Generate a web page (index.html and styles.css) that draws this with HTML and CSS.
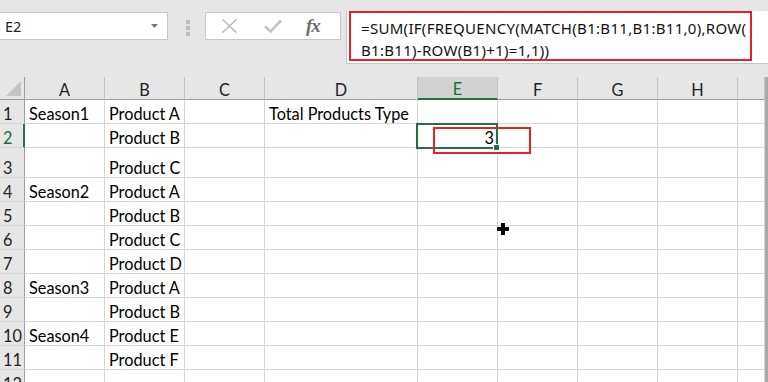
FILE: index.html
```html
<!DOCTYPE html>
<html lang="en">

<head>
    <meta charset="UTF-8">
    <title>Count unique products</title>
    <link rel="stylesheet" href="styles.css">
</head>

<body>
    <div class="formula-bar">
        <div class="name-box">
            <span>E2</span>
            <svg class="caret" width="7" height="4" viewBox="0 0 7 4"><path d="M0 0H7L3.5 4Z" fill="#777" /></svg>
        </div>
        <div class="grip"><i></i><i></i><i></i></div>
        <div class="fx-buttons">
            <svg width="17" height="14" viewBox="0 0 17 14">
                <path d="M1.5 0.5L15.5 13.5M15.5 0.5L1.5 13.5" stroke="#bdbdbd" stroke-width="1.6" fill="none" />
            </svg>
            <svg width="18" height="14" viewBox="0 0 18 14">
                <path d="M1 7.5L6.5 12.5L17 1.5" stroke="#c4c4c4" stroke-width="2.6" fill="none" />
            </svg>
            <span class="fx">fx</span>
        </div>
        <div class="formula-input">
            <div class="formula-text">=SUM(IF(FREQUENCY(MATCH(B1:B11,B1:B11,0),ROW(<br>B1:B11)-ROW(B1)+1)=1,1))</div>
        </div>
    </div>

    <div class="sheet">
        <div class="corner"><svg width="15" height="15" viewBox="0 0 15 15"><path d="M15 0V15H0Z" fill="#c2c2c2" /></svg></div>
        <div class="col-head">A</div>
        <div class="col-head">B</div>
        <div class="col-head">C</div>
        <div class="col-head">D</div>
        <div class="col-head active">E</div>
        <div class="col-head">F</div>
        <div class="col-head">G</div>
        <div class="col-head">H</div>
        <div class="col-head"></div>

        <div class="row-head">1</div>
        <div class="cell">Season1</div>
        <div class="cell">Product A</div>
        <div class="cell"></div>
        <div class="cell">Total Products Type</div>
        <div class="cell"></div>
        <div class="cell"></div>
        <div class="cell"></div>
        <div class="cell"></div>
        <div class="cell"></div>

        <div class="row-head active">2</div>
        <div class="cell"></div>
        <div class="cell">Product B</div>
        <div class="cell"></div>
        <div class="cell"></div>
        <div class="cell number selected">3<span class="mark"></span></div>
        <div class="cell"></div>
        <div class="cell"></div>
        <div class="cell"></div>
        <div class="cell"></div>

        <div class="row-head">3</div>
        <div class="cell"></div>
        <div class="cell">Product C</div>
        <div class="cell"></div>
        <div class="cell"></div>
        <div class="cell"></div>
        <div class="cell"></div>
        <div class="cell"></div>
        <div class="cell"></div>
        <div class="cell"></div>

        <div class="row-head">4</div>
        <div class="cell">Season2</div>
        <div class="cell">Product A</div>
        <div class="cell"></div>
        <div class="cell"></div>
        <div class="cell"></div>
        <div class="cell"></div>
        <div class="cell"></div>
        <div class="cell"></div>
        <div class="cell"></div>

        <div class="row-head">5</div>
        <div class="cell"></div>
        <div class="cell">Product B</div>
        <div class="cell"></div>
        <div class="cell"></div>
        <div class="cell"></div>
        <div class="cell"></div>
        <div class="cell"></div>
        <div class="cell"></div>
        <div class="cell"></div>

        <div class="row-head">6</div>
        <div class="cell"></div>
        <div class="cell">Product C</div>
        <div class="cell"></div>
        <div class="cell"></div>
        <div class="cell"></div>
        <div class="cell"></div>
        <div class="cell"></div>
        <div class="cell"></div>
        <div class="cell"></div>

        <div class="row-head">7</div>
        <div class="cell"></div>
        <div class="cell">Product D</div>
        <div class="cell"></div>
        <div class="cell"></div>
        <div class="cell"></div>
        <div class="cell"></div>
        <div class="cell"></div>
        <div class="cell"></div>
        <div class="cell"></div>

        <div class="row-head">8</div>
        <div class="cell">Season3</div>
        <div class="cell">Product A</div>
        <div class="cell"></div>
        <div class="cell"></div>
        <div class="cell"></div>
        <div class="cell"></div>
        <div class="cell"></div>
        <div class="cell"></div>
        <div class="cell"></div>

        <div class="row-head">9</div>
        <div class="cell"></div>
        <div class="cell">Product B</div>
        <div class="cell"></div>
        <div class="cell"></div>
        <div class="cell"></div>
        <div class="cell"></div>
        <div class="cell"></div>
        <div class="cell"></div>
        <div class="cell"></div>

        <div class="row-head">10</div>
        <div class="cell">Season4</div>
        <div class="cell">Product E</div>
        <div class="cell"></div>
        <div class="cell"></div>
        <div class="cell"></div>
        <div class="cell"></div>
        <div class="cell"></div>
        <div class="cell"></div>
        <div class="cell"></div>

        <div class="row-head">11</div>
        <div class="cell"></div>
        <div class="cell">Product F</div>
        <div class="cell"></div>
        <div class="cell"></div>
        <div class="cell"></div>
        <div class="cell"></div>
        <div class="cell"></div>
        <div class="cell"></div>
        <div class="cell"></div>

        <div class="row-head">12</div>
        <div class="cell"></div>
        <div class="cell"></div>
        <div class="cell"></div>
        <div class="cell"></div>
        <div class="cell"></div>
        <div class="cell"></div>
        <div class="cell"></div>
        <div class="cell"></div>
        <div class="cell"></div>

        <svg class="cursor" width="12" height="12" viewBox="0 0 12 12">
            <path d="M4 0H8V4H12V8H8V12H4V8H0V4H4Z" fill="#000" />
        </svg>
    </div>
</body>

</html>
```

FILE: styles.css
```css
body {
    margin: 0;
    width: 768px;
    height: 382px;
    overflow: hidden;
    background-color: #e6e6e6;
    font-family: Lato, 'Liberation Sans', sans-serif;
    color: #000;
}

/* formula bar */

.formula-bar {
    display: flex;
    align-items: flex-start;
    height: 77px;
    padding-top: 12px;
    box-sizing: border-box;
    font-family: 'Noto Sans', 'Open Sans', sans-serif;
}

.name-box {
    display: flex;
    align-items: center;
    justify-content: space-between;
    width: 168px;
    height: 28px;
    box-sizing: border-box;
    padding: 0 9px 0 5px;
    background: white;
    border: 1px solid #c6c6c6;
    border-left: none;
    font-size: 14.5px;
    color: #222;
}

.grip {
    display: flex;
    flex-direction: column;
    gap: 2px;
    margin: 8px 0 0 18px;
}

.grip i {
    width: 4px;
    height: 4px;
    background: #bcbcbc;
}

.fx-buttons {
    display: flex;
    align-items: center;
    width: 136px;
    height: 28px;
    box-sizing: border-box;
    margin-left: 15px;
    padding-left: 15px;
    gap: 26px;
    background: white;
    border: 1px solid #c6c6c6;
}

.fx {
    font-family: 'Liberation Serif', serif;
    font-style: italic;
    font-weight: bold;
    font-size: 19px;
    color: #6e6e6e;
    margin-left: -2px;
    letter-spacing: -1px;
}

.formula-input {
    flex: 1;
    height: 53px;
    margin: -1px 0 0 5px;
    padding-left: 2px;
    box-sizing: border-box;
    background: white;
    border-left: 1px solid #c6c6c6;
    border-bottom: 1px solid #c6c6c6;
}

.formula-text {
    width: 403px;
    height: 50px;
    box-sizing: border-box;
    border: 2px solid #e8202a;
    padding: 4px 0 0 10px;
    font-size: 15px;
    letter-spacing: 0.3px;
    line-height: 22px;
    white-space: nowrap;
    color: #111;
}

/* sheet */

.sheet {
    position: relative;
    display: grid;
    grid-template-columns: 25px 80px 80px 80px 153px 80px 80px 80px 80px 27px;
    grid-template-rows: 23px 24px 24px 30px repeat(9, 24px);
    width: 768px;
    box-sizing: border-box;
    border-right: 3px solid #a9a9a9;
    font-size: 16.3px;
    line-height: 19px;
}

.corner {
    display: flex;
    align-items: flex-end;
    justify-content: flex-end;
    padding: 0 3px 3px 0;
    border-right: 1px solid #9f9f9f;
    border-bottom: 1px solid #9f9f9f;
}

.col-head {
    display: flex;
    align-items: flex-end;
    justify-content: center;
    border-right: 1px solid #c3c3c3;
    border-bottom: 1px solid #9f9f9f;
    color: #222;
}

.col-head.active {
    background: #d2d2d2;
    border-bottom: 2px solid #217346;
    color: #1e6b40;
}

.row-head {
    display: flex;
    align-items: flex-end;
    padding-left: 3px;
    border-right: 1px solid #9f9f9f;
    border-bottom: 1px solid #d4d4d4;
    color: #222;
}

.row-head.active {
    border-right: 2px solid #217346;
    color: #1e6b40;
}

.cell {
    display: flex;
    align-items: flex-end;
    padding-left: 4px;
    background: white;
    border-right: 1px solid #d4d4d4;
    border-bottom: 1px solid #d4d4d4;
    white-space: nowrap;
}

.cell.number {
    justify-content: flex-end;
    padding-right: 3px;
}

.cell.selected {
    position: relative;
}

.cell.selected::after {
    content: "";
    position: absolute;
    top: -1px;
    left: -2px;
    right: -1px;
    bottom: -2px;
    border: 2px solid #217346;
}

.cell.selected::before {
    content: "";
    position: absolute;
    right: -3px;
    bottom: -4px;
    width: 5px;
    height: 5px;
    background: #217346;
    border: 1px solid white;
    z-index: 3;
}

.mark {
    position: absolute;
    left: 15px;
    top: 3px;
    width: 98px;
    height: 27px;
    box-sizing: border-box;
    border: 2px solid #e8202a;
    z-index: 2;
}

.cursor {
    position: absolute;
    left: 497px;
    top: 146px;
}
```
